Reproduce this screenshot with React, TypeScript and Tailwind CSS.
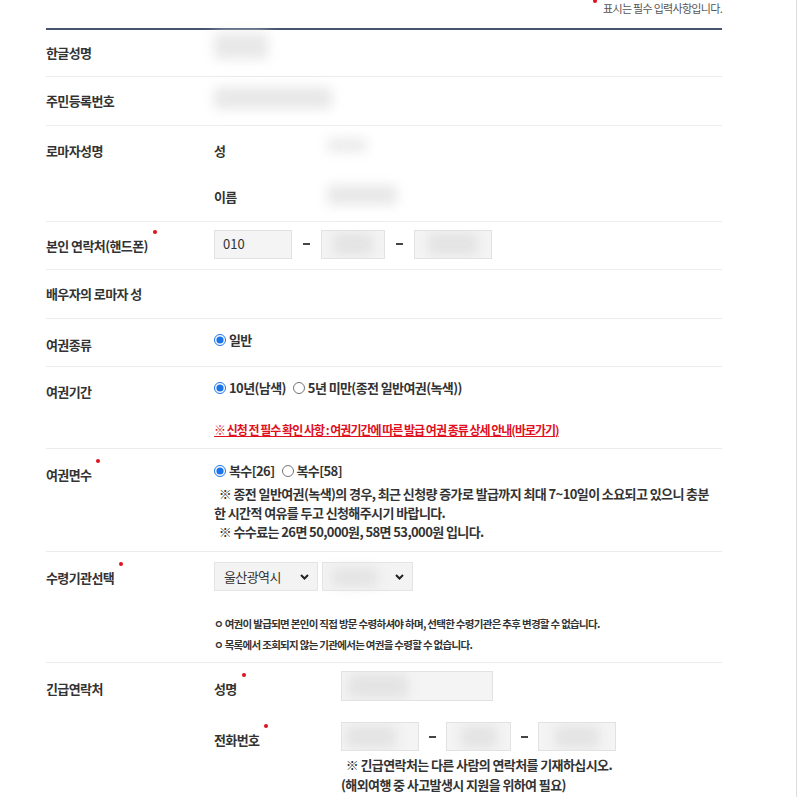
import React from "react";

function Dot() {
  return <span className="absolute right-[-9px] top-[-7px] w-[4px] h-[4px] rounded-full bg-[#e0101e]" />;
}

function ReqLabel({ children }: { children: React.ReactNode }) {
  return (
    <span className="relative inline-block">
      {children}
      <Dot />
    </span>
  );
}

function Blur({ className }: { className: string }) {
  return <div className={"bg-[#e3e3e3] blur-[6px] rounded " + className} />;
}

function Box({ className, children }: { className: string; children?: React.ReactNode }) {
  return (
    <div className={"bg-[#f4f4f4] border border-[#e2e2e2] flex items-center overflow-hidden " + className}>
      {children}
    </div>
  );
}

function Dash() {
  return <span className="w-[7px] h-[2px] bg-[#444] mx-[11px]" />;
}

function Radio({ name, checked, label }: { name: string; checked?: boolean; label: string }) {
  return (
    <label className="inline-flex items-center gap-[3px] mr-[7px]">
      <input type="radio" name={name} defaultChecked={checked} className="w-[12px] h-[12px] m-0 accent-[#1a73e8]" />
      <span>{label}</span>
    </label>
  );
}

function Select({ className, children }: { className: string; children?: React.ReactNode }) {
  return (
    <div className={"h-[29px] bg-[#f3f3f3] border border-[#e4e4e4] flex items-center justify-between pl-[9px] pr-[8px] " + className}>
      <span className="font-normal">{children}</span>
      <svg width="9" height="6" viewBox="0 0 9 6">
        <path d="M1 1l3.5 3.5L8 1" fill="none" stroke="#222" strokeWidth="2" />
      </svg>
    </div>
  );
}

export default function App() {
  return (
    <div className="w-[797px] min-h-[797px] bg-white border-r border-[#dcdcdc] font-['Noto_Sans_CJK_KR','Noto_Sans',sans-serif] text-[13px] font-bold text-[#333] tracking-[-0.6px] leading-[18px]">
      <div className="w-[676px] ml-[46px]">
        {/* required note */}
        <div className="h-[28px] flex justify-end items-start">
          <span className="relative text-[11px] font-normal text-[#555] leading-[16px] tracking-[-0.7px]">
            <span className="absolute left-[-10px] top-[-1px] w-[4px] h-[4px] rounded-full bg-[#e0101e]" />
            표시는 필수 입력사항입니다.
          </span>
        </div>
        <div className="border-t-2 border-[#46556f]" />

        {/* 한글성명 */}
        <div className="flex items-center h-[47px] border-b border-[#ececec]">
          <div className="w-[168px]">한글성명</div>
          <Blur className="w-[54px] h-[26px] mt-[-14px] bg-[#e8e8e8]" />
        </div>

        {/* 주민등록번호 */}
        <div className="flex items-center h-[49px] border-b border-[#ececec]">
          <div className="w-[168px]">주민등록번호</div>
          <Blur className="w-[118px] h-[22px] mt-[-6px] bg-[#e8e8e8]" />
        </div>

        {/* 로마자성명 */}
        <div className="flex pt-[16px] pb-[15px] border-b border-[#ececec]">
          <div className="w-[168px]">로마자성명</div>
          <div className="flex flex-col">
            <div className="flex items-center">
              <span className="w-[113px]">성</span>
              <Blur className="w-[40px] h-[14px] mt-[-12px] bg-[#ebebeb]" />
            </div>
            <div className="flex items-center mt-[28px]">
              <span className="w-[113px]">이름</span>
              <Blur className="w-[70px] h-[20px] mt-[-4px] bg-[#e8e8e8]" />
            </div>
          </div>
        </div>

        {/* 본인 연락처 */}
        <div className="flex items-center h-[48px] border-b border-[#ececec]">
          <div className="w-[168px]">
            <ReqLabel>본인 연락처(핸드폰)</ReqLabel>
          </div>
          <div className="flex items-center mt-[-3px]">
            <Box className="w-[78px] h-[29px] pl-[8px] font-normal text-[#333] tracking-normal">010</Box>
            <Dash />
            <Box className="w-[64px] h-[29px] justify-center">
              <Blur className="w-[40px] h-[22px]" />
            </Box>
            <Dash />
            <Box className="w-[78px] h-[29px] justify-center">
              <Blur className="w-[50px] h-[22px]" />
            </Box>
          </div>
        </div>

        {/* 배우자 */}
        <div className="flex items-center h-[49px] border-b border-[#ececec]">
          <div className="w-[168px]">배우자의 로마자 성</div>
        </div>

        {/* 여권종류 */}
        <div className="flex h-[48px] border-b border-[#ececec]">
          <div className="w-[168px] pt-[17px]">여권종류</div>
          <div className="pt-[12px]">
            <Radio name="type" checked label="일반" />
          </div>
        </div>

        {/* 여권기간 */}
        <div className="flex h-[82px] border-b border-[#ececec]">
          <div className="w-[168px] pt-[16px]">여권기간</div>
          <div className="pt-[12px] flex flex-col">
            <div className="flex items-center">
              <Radio name="period" checked label="10년(남색)" />
              <Radio name="period" label="5년 미만(종전 일반여권(녹색))" />
            </div>
            <a className="mt-[24px] text-[#e0101e] underline text-[12px] tracking-[-1px]">
              ※ 신청 전 필수 확인 사항 : 여권기간에 따른 발급 여권 종류 상세 안내(바로가기)
            </a>
          </div>
        </div>

        {/* 여권면수 */}
        <div className="flex h-[103px] border-b border-[#ececec]">
          <div className="w-[168px] pt-[17px]">
            <ReqLabel>여권면수</ReqLabel>
          </div>
          <div className="pt-[13px] flex-1">
            <div className="flex items-center">
              <Radio name="pages" checked label="복수[26]" />
              <Radio name="pages" label="복수[58]" />
            </div>
            <div className="mt-[4px] leading-[19px] tracking-[-0.6px]">
              <p>
                &nbsp;&nbsp;※ 종전 일반여권(녹색)의 경우, 최근 신청량 증가로 발급까지 최대 7~10일이 소요되고 있으니 충분
                <br />한 시간적 여유를 두고 신청해주시기 바랍니다.
              </p>
              <p>&nbsp;&nbsp;※ 수수료는 26면 50,000원, 58면 53,000원 입니다.</p>
            </div>
          </div>
        </div>

        {/* 수령기관선택 */}
        <div className="flex h-[111px] border-b border-[#ececec]">
          <div className="w-[168px] pt-[17px]">
            <ReqLabel>수령기관선택</ReqLabel>
          </div>
          <div className="pt-[10px] flex flex-col">
            <div className="flex gap-[4px]">
              <Select className="w-[104px]">울산광역시</Select>
              <Select className="w-[91px]">
                <Blur className="w-[46px] h-[18px]" />
              </Select>
            </div>
            <div className="mt-[22px] text-[10.5px] leading-[21px] tracking-[-0.7px]">
              <p>ㅇ 여권이 발급되면 본인이 직접 방문 수령하셔야 하며, 선택한 수령기관은 추후 변경할 수 없습니다.</p>
              <p>ㅇ 목록에서 조회되지 않는 기관에서는 여권을 수령할 수 없습니다.</p>
            </div>
          </div>
        </div>

        {/* 긴급연락처 */}
        <div className="flex pt-[17px]">
          <div className="w-[168px]">긴급연락처</div>
          <div className="flex flex-col">
            <div className="flex">
              <div className="w-[127px]">
                <ReqLabel>성명</ReqLabel>
              </div>
              <Box className="w-[152px] h-[30px] mt-[-9px] pl-[6px]">
                <Blur className="w-[60px] h-[24px]" />
              </Box>
            </div>
            <div className="flex mt-[30px]">
              <div className="w-[127px]">
                <ReqLabel>전화번호</ReqLabel>
              </div>
              <div className="flex flex-col">
                <div className="flex items-center mt-[-9px]">
                  <Box className="w-[78px] h-[29px] pl-[4px]">
                    <Blur className="w-[50px] h-[22px]" />
                  </Box>
                  <span className="w-[7px] h-[2px] bg-[#444] ml-[10px] mr-[10px]" />
                  <Box className="w-[65px] h-[29px] justify-center">
                    <Blur className="w-[36px] h-[22px]" />
                  </Box>
                  <span className="w-[7px] h-[2px] bg-[#444] ml-[10px] mr-[10px]" />
                  <Box className="w-[78px] h-[29px] justify-center">
                    <Blur className="w-[44px] h-[22px]" />
                  </Box>
                </div>
                <div className="mt-[4px] leading-[20px] tracking-[-0.6px]">
                  <p>&nbsp;&nbsp;※ 긴급연락처는 다른 사람의 연락처를 기재하십시오.</p>
                  <p>(해외여행 중 사고발생시 지원을 위하여 필요)</p>
                </div>
              </div>
            </div>
          </div>
        </div>
      </div>
    </div>
  );
}
